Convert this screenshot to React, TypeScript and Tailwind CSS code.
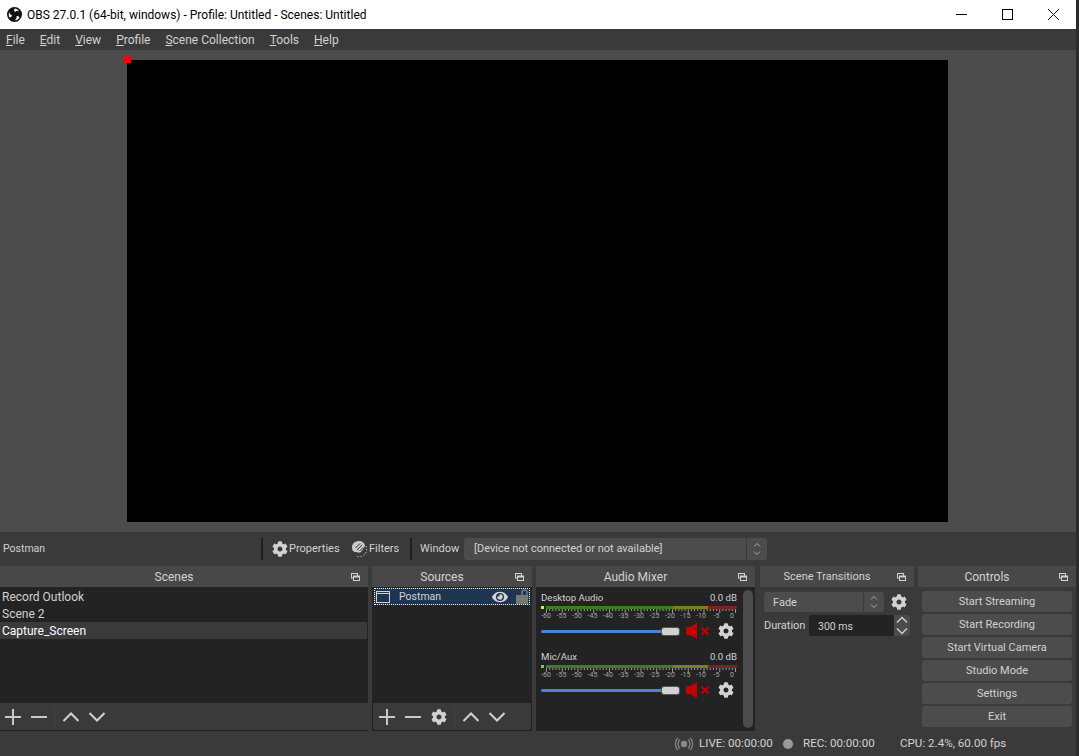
import { FaCog, FaEye } from 'react-icons/fa'

const font = "[font-family:'Roboto',sans-serif]"

function Gear({ size = 16 }: { size?: number }) {
  return <FaCog size={size} className="shrink-0 text-[#d2d2d2]" />
}

function DockIcon() {
  return (
    <svg width="9" height="8" viewBox="0 0 9 8" className="shrink-0">
      <rect x="0.5" y="0.5" width="6" height="4.5" fill="none" stroke="#d2d2d2" />
      <rect x="2" y="2.5" width="7" height="5.5" fill="#d2d2d2" />
      <rect x="3" y="4.5" width="5" height="2.5" fill="#484848" />
    </svg>
  )
}

function DockTitle({ title, small }: { title: string; small?: boolean }) {
  return (
    <div className="relative flex h-[21px] shrink-0 items-center justify-center bg-[#484848] pr-[20px] text-[12px] text-[#d2d2d2]">
      <span className={small ? 'pt-[2px] text-[11px]' : ''}>{title}</span>
      <span className="absolute right-[8px] top-[7px]">
        <DockIcon />
      </span>
    </div>
  )
}

function Plus() {
  return (
    <svg width="16" height="16" viewBox="0 0 16 16" className="shrink-0">
      <path d="M0 8H16M8 0V16" stroke="#c8c8c8" strokeWidth="2" />
    </svg>
  )
}

function Minus() {
  return (
    <svg width="16" height="16" viewBox="0 0 16 16" className="shrink-0">
      <path d="M0 8H16" stroke="#c8c8c8" strokeWidth="2" />
    </svg>
  )
}

function Up() {
  return (
    <svg width="16" height="16" viewBox="0 0 16 16" className="shrink-0">
      <path d="M0.5 12L8 4.5L15.5 12" fill="none" stroke="#d2d2d2" strokeWidth="2" />
    </svg>
  )
}

function Down() {
  return (
    <svg width="16" height="16" viewBox="0 0 16 16" className="shrink-0">
      <path d="M0.5 4L8 11.5L15.5 4" fill="none" stroke="#d2d2d2" strokeWidth="2" />
    </svg>
  )
}

function Separator() {
  return <div className="h-[22px] w-[2px] shrink-0 border border-[#1f1f1f] bg-[#3a3a3a]" />
}

function SpinArrows() {
  return (
    <svg width="8" height="14" viewBox="0 0 8 14" className="shrink-0">
      <path d="M1 4.5L4 1.5L7 4.5M1 9.5L4 12.5L7 9.5" fill="none" stroke="#a8a8a8" />
    </svg>
  )
}

function FiltersIcon() {
  return (
    <svg width="18" height="18" viewBox="0 0 18 18" className="shrink-0">
      <path d="M15 6A7.5 7.5 0 0 1 5 16" fill="none" stroke="#c8c8c8" strokeDasharray="1.5 1.5" />
      <path d="M1 7C1 3 5 1 8 1C11 1 14 3 14 6L10 12C8 13 7 12.5 5 12C2 12 1 10 1 7Z" fill="#c8c8c8" />
      <path d="M4.5 8L9 3.5M6 10L11 5M8.5 11L12 7.5" stroke="#3a3a3a" strokeWidth="1" />
    </svg>
  )
}

function Speaker() {
  return (
    <svg width="24" height="16" viewBox="0 0 24 16" className="shrink-0">
      <path d="M0 4H4L11 0V16L4 12H0Z" fill="#c40000" />
      <path d="M15.5 4.5L22.5 11.5M22.5 4.5L15.5 11.5" stroke="#c40000" strokeWidth="2" />
    </svg>
  )
}

function Ticks() {
  const marks = []
  for (let i = 0; i <= 60; i++) {
    const x = 0.5 + i * 3.15
    marks.push(<path key={i} d={`M${x} 0V${i % 5 === 0 ? 4 : 2}`} stroke="#9a9a9a" strokeWidth="1" />)
  }
  return (
    <svg width="190" height="4" viewBox="0 0 190 4" className="ml-[5px] block">
      {marks}
    </svg>
  )
}

function Strip({ name, level }: { name: string; level: string }) {
  const labels = ['-60', '-55', '-50', '-45', '-40', '-35', '-30', '-25', '-20', '-15', '-10', '-5', '0']
  return (
    <div className="flex h-[59px] flex-col">
      <div className="mt-[1px] flex h-[16px] items-center justify-between text-[9.6px] leading-none text-[#d2d2d2]">
        <span>{name}</span>
        <span>0.0 dB</span>
      </div>
      <div className="flex h-[3px] items-stretch">
        <div className={`w-[3px] ${level}`} />
        <div className="ml-[2px] w-[127px] bg-[#3d7d22]" />
        <div className="w-[35px] bg-[#7d7d22]" />
        <div className="w-[29px] bg-[#7d2222]" />
      </div>
      <Ticks />
      <div className="ml-[-1px] flex w-[198px] justify-between text-[7px] leading-[7px] text-[#a8a8a8]">
        {labels.map(l => (
          <span key={l} className="w-[12px] text-center">{l}</span>
        ))}
      </div>
      <div className="mt-[3px] flex h-[16px] items-center">
        <div className="h-[3px] w-[120px] rounded-l-sm bg-[#4a84d4]" />
        <div className="h-[9px] w-[19px] rounded-[3px] border border-[#555] bg-[#d2d2d2]" />
        <div className="ml-[6px]"><Speaker /></div>
        <div className="ml-[8px]"><Gear /></div>
      </div>
    </div>
  )
}

const buttons = ['Start Streaming', 'Start Recording', 'Start Virtual Camera', 'Studio Mode', 'Settings', 'Exit']

export default function App() {
  return (
    <div className={`flex h-[756px] w-[1079px] flex-col overflow-hidden border-r-[3px] border-[#2b2b2b] bg-[#3a3a3a] ${font} text-[12px] text-[#d2d2d2]`}>
      <div className="flex h-[29px] shrink-0 items-center bg-white pl-[7px] text-black">
        <svg width="15" height="15" viewBox="0 0 16 16" className="shrink-0">
          <circle cx="8" cy="8" r="8" fill="#111" />
          <g fill="#fff">
            <path d="M8.5 1.6A6.4 6.4 0 0 1 13.4 5.2A3.6 3.6 0 0 0 8.6 5.2A2.1 2.1 0 0 1 8.5 1.6Z" />
            <path transform="rotate(120 8 8)" d="M8.5 1.6A6.4 6.4 0 0 1 13.4 5.2A3.6 3.6 0 0 0 8.6 5.2A2.1 2.1 0 0 1 8.5 1.6Z" />
            <path transform="rotate(240 8 8)" d="M8.5 1.6A6.4 6.4 0 0 1 13.4 5.2A3.6 3.6 0 0 0 8.6 5.2A2.1 2.1 0 0 1 8.5 1.6Z" />
          </g>
        </svg>
        <span className="ml-[5px]">OBS 27.0.1 (64-bit, windows) - Profile: Untitled - Scenes: Untitled</span>
        <div className="ml-auto flex items-center">
          <div className="h-px w-[11px] bg-black" />
          <div className="ml-[35px] h-[11px] w-[11px] border border-black" />
          <svg width="11" height="11" viewBox="0 0 11 11" className="ml-[35px] mr-[17px]">
            <path d="M0 0L11 11M11 0L0 11" stroke="#111" />
          </svg>
        </div>
      </div>

      <div className="flex h-[21px] shrink-0 items-center gap-[15px] bg-[#3a3a3a] pl-[6px] text-[#d2d2d2]">
        <span><u>F</u>ile</span>
        <span><u>E</u>dit</span>
        <span><u>V</u>iew</span>
        <span><u>P</u>rofile</span>
        <span><u>S</u>cene Collection</span>
        <span><u>T</u>ools</span>
        <span><u>H</u>elp</span>
      </div>

      <div className="relative flex h-[482px] shrink-0 justify-start bg-[#4c4c4c] pl-[127px] pt-[10px]">
        <div className="h-[462px] w-[821px] bg-black" />
        <div className="absolute left-[124px] top-[6px] h-[7px] w-[7px] bg-[#ff0000]" />
      </div>

      <div className="flex h-[34px] shrink-0 items-center pl-[3px] text-[11px]">
        <span className="w-[258px] text-[10.5px]">Postman</span>
        <Separator />
        <div className="ml-[9px]"><Gear /></div>
        <span className="ml-[1px] w-[50px]">Properties</span>
        <div className="ml-[12px]"><FiltersIcon /></div>
        <span className="w-[41px]">Filters</span>
        <Separator />
        <span className="ml-[8px] w-[44px]">Window</span>
        <div className="flex h-[22px] w-[303px] items-center rounded-[3px] bg-[#4c4c4c] pl-[10px]">
          <span className="flex-1">[Device not connected or not available]</span>
          <div className="flex h-full w-[21px] items-center justify-center border-l border-[#3a3a3a]">
            <SpinArrows />
          </div>
        </div>
      </div>

      <div className="flex h-[166px] shrink-0">
        <div className="flex w-[368px] shrink-0 flex-col">
          <DockTitle title="Scenes" />
          <div className="h-[116px] bg-[#232323] pt-[1px] pr-px">
            <div className="flex h-[17px] items-center pl-[2px]">Record Outlook</div>
            <div className="flex h-[17px] items-center pl-[2px]">Scene 2</div>
            <div className="flex h-[17px] items-center bg-[#3a3a3a] pl-[2px] text-white">Capture_Screen</div>
          </div>
          <div className="flex h-[28px] items-center border-b border-[#1f1f1f] pl-[5px]">
            <Plus />
            <div className="ml-[10px]"><Minus /></div>
            <div className="ml-[7px] h-[22px] w-px bg-[#444]" />
            <div className="ml-[8px] flex gap-[10px]"><Up /><Down /></div>
          </div>
        </div>

        <div className="ml-[4px] flex w-[160px] shrink-0 flex-col">
          <DockTitle title="Sources" />
          <div className="h-[116px] bg-[#232323] pt-[1px] px-[2px]">
            <div className="flex h-[17px] items-center border border-dotted border-white bg-[#1d3550] pl-[1px]">
              <svg width="14" height="12" viewBox="0 0 14 12" className="shrink-0">
                <rect x="0.5" y="0.5" width="13" height="11" fill="none" stroke="#d2d2d2" />
                <path d="M1 2.5H13" stroke="#d2d2d2" />
              </svg>
              <span className="ml-[9px] flex-1 pt-px text-[10.5px]">Postman</span>
              <FaEye size={16} className="shrink-0 text-[#d2d2d2]" />
              <svg width="13" height="15" viewBox="0 0 13 15" className="ml-[8px] shrink-0">
                <rect x="0" y="6" width="12" height="9" fill="#777" />
                <path d="M6 6V3.5A2.5 2.5 0 0 1 11 3.5V6" fill="none" stroke="#777" strokeWidth="1.6" />
              </svg>
            </div>
          </div>
          <div className="flex h-[28px] items-center border-x border-b border-[#1f1f1f] pl-[6px]">
            <Plus />
            <div className="ml-[10px]"><Minus /></div>
            <div className="ml-[10px]"><Gear /></div>
            <div className="ml-[7px] h-[22px] w-px bg-[#444]" />
            <div className="ml-[8px] flex gap-[10px]"><Up /><Down /></div>
          </div>
        </div>

        <div className="ml-[4px] flex w-[219px] shrink-0 flex-col">
          <DockTitle title="Audio Mixer" />
          <div className="flex h-[144px] bg-[#232323] pl-[5px] pt-[2px]">
            <div className="w-[196px]">
              <Strip name="Desktop Audio" level="bg-[#e8e84a]" />
              <Strip name="Mic/Aux" level="bg-[#4ae84a]" />
            </div>
            <div className="ml-[6px] mt-[1px] h-[138px] w-[10px] rounded-[5px] bg-[#4c4c4c]" />
          </div>
        </div>

        <div className="ml-[5px] flex w-[154px] shrink-0 flex-col">
          <DockTitle title="Scene Transitions" small />
          <div className="flex flex-col pt-[5px] pl-[4px] text-[11px]">
            <div className="flex h-[20px] items-center">
              <div className="flex h-full w-[120px] items-center rounded-[3px] bg-[#4c4c4c] pl-[9px]">
                <span className="flex-1 pt-[2px]">Fade</span>
                <div className="flex h-full w-[21px] items-center justify-center border-l border-[#3a3a3a]">
                  <SpinArrows />
                </div>
              </div>
              <div className="ml-[7px]"><Gear /></div>
            </div>
            <div className="mt-[3px] flex h-[21px] items-center">
              <span className="w-[45px] pt-[2px]">Duration</span>
              <div className="flex h-full w-[85px] items-center rounded-l-[3px] bg-[#232323] pl-[9px] pt-[2px] text-[10.5px]">300 ms</div>
              <div className="flex h-full w-[16px] flex-col gap-px rounded-r-[3px] bg-[#4c4c4c]">
                <svg width="16" height="10" viewBox="0 0 16 10" className="shrink-0">
                  <path d="M3 7.5L8 2.5L13 7.5" fill="none" stroke="#d2d2d2" strokeWidth="1.4" />
                </svg>
                <svg width="16" height="10" viewBox="0 0 16 10" className="shrink-0">
                  <path d="M3 2.5L8 7.5L13 2.5" fill="none" stroke="#d2d2d2" strokeWidth="1.4" />
                </svg>
              </div>
            </div>
          </div>
        </div>

        <div className="ml-[4px] flex flex-1 flex-col">
          <DockTitle title="Controls" />
          <div className="ml-[4px] flex w-[150px] flex-col gap-[2px] pt-[4px] text-[11px]">
            {buttons.map(b => (
              <div key={b} className="flex h-[21px] items-center justify-center rounded-[3px] bg-[#4c4c4c] pt-[2px]">{b}</div>
            ))}
          </div>
        </div>
      </div>

      <div className="flex flex-1 items-center pl-[675px] text-[11.6px]">
        <svg width="18" height="14" viewBox="0 0 18 14" className="shrink-0">
          <circle cx="9" cy="7" r="3.2" fill="#8a8a8a" />
          <path d="M5 2.5A6 6 0 0 0 5 11.5M13 2.5A6 6 0 0 1 13 11.5M2.8 1A8.5 8.5 0 0 0 2.8 13M15.2 1A8.5 8.5 0 0 1 15.2 13" fill="none" stroke="#8a8a8a" strokeWidth="1.2" />
        </svg>
        <span className="ml-[6px] w-[84px]">LIVE: 00:00:00</span>
        <div className="h-[10px] w-[10px] rounded-full bg-[#9a9a9a]" />
        <span className="ml-[10px] w-[97px]">REC: 00:00:00</span>
        <span>CPU: 2.4%, 60.00 fps</span>
      </div>
    </div>
  )
}
